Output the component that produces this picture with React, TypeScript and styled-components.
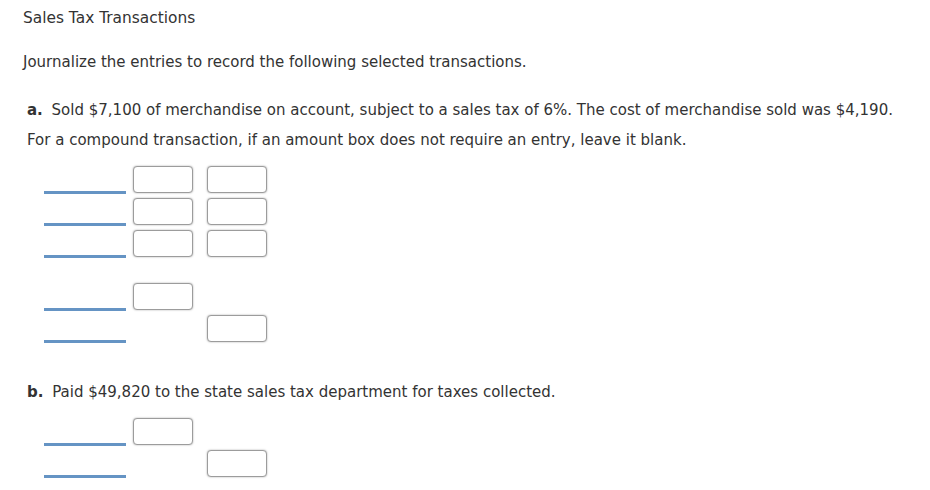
import React from 'react';
import styled, { createGlobalStyle } from 'styled-components';

const GlobalStyle = createGlobalStyle`
    body {
        margin: 0;
        background: #fff;
        font-family: "DejaVu Sans", Verdana, sans-serif;
        color: #333;
    }
`;

type Row = { debit?: boolean; credit?: boolean };

const partA: Row[][] = [
    [
        { debit: true, credit: true },
        { debit: true, credit: true },
        { debit: true, credit: true },
    ],
    [{ debit: true }, { credit: true }],
];

const partB: Row[][] = [[{ debit: true }, { credit: true }]];

const Page = styled.div`
    padding: 8px 0 0 23px;
    width: 930px;
    box-sizing: border-box;
`;

const Title = styled.h1`
    margin: 0;
    font-size: 15.4px;
    font-weight: normal;
    line-height: 20px;
`;

const Intro = styled.p`
    margin: 24px 0 0;
    font-size: 15px;
    line-height: 20px;
`;

const Part = styled.section<{ $top: number }>`
    padding-left: 4px;
    margin-top: ${(p) => p.$top}px;
`;

const Line = styled.p`
    margin: 0;
    font-size: 15px;
    line-height: 30px;
    white-space: nowrap;
`;

const Letter = styled.b`
    margin-right: 4px;
`;

const Journal = styled.div`
    margin-top: 11px;
    padding-left: 17px;
    display: flex;
    flex-direction: column;
    gap: 21px;
`;

const Group = styled.div`
    display: flex;
    flex-direction: column;
`;

const EntryRow = styled.div`
    display: grid;
    grid-template-columns: 82px 60px 67px;
    column-gap: 7px;
    height: 32px;
`;

const Account = styled.div`
    align-self: start;
    margin-top: 25px;
    height: 3px;
    background: #6594c4;
`;

const Amount = styled.div<{ $hidden?: boolean }>`
    justify-self: end;
    width: 60px;
    height: 27px;
    box-sizing: border-box;
    border: 1px solid #9c9c9c;
    border-radius: 4px;
    box-shadow: 0 0 2px rgba(0, 0, 0, 0.35);
    background: #fff;
    visibility: ${(p) => (p.$hidden ? 'hidden' : 'visible')};
`;

function Entries({ groups }: { groups: Row[][] }) {
    return (
        <Journal>
            {groups.map((rows, g) => (
                <Group key={g}>
                    {rows.map((row, i) => (
                        <EntryRow key={i}>
                            <Account />
                            <Amount $hidden={!row.debit} />
                            <Amount $hidden={!row.credit} />
                        </EntryRow>
                    ))}
                </Group>
            ))}
        </Journal>
    );
}

export default function App() {
    return (
        <Page>
            <GlobalStyle />
            <Title>Sales Tax Transactions</Title>
            <Intro>Journalize the entries to record the following selected transactions.</Intro>

            <Part $top={23}>
                <Line>
                    <Letter>a.</Letter> Sold $7,100 of merchandise on account, subject to a sales tax of 6%. The cost of merchandise sold was $4,190.
                </Line>
                <Line>For a compound transaction, if an amount box does not require an entry, leave it blank.</Line>
                <Entries groups={partA} />
            </Part>

            <Part $top={30}>
                <Line>
                    <Letter>b.</Letter> Paid $49,820 to the state sales tax department for taxes collected.
                </Line>
                <Entries groups={partB} />
            </Part>
        </Page>
    );
}
